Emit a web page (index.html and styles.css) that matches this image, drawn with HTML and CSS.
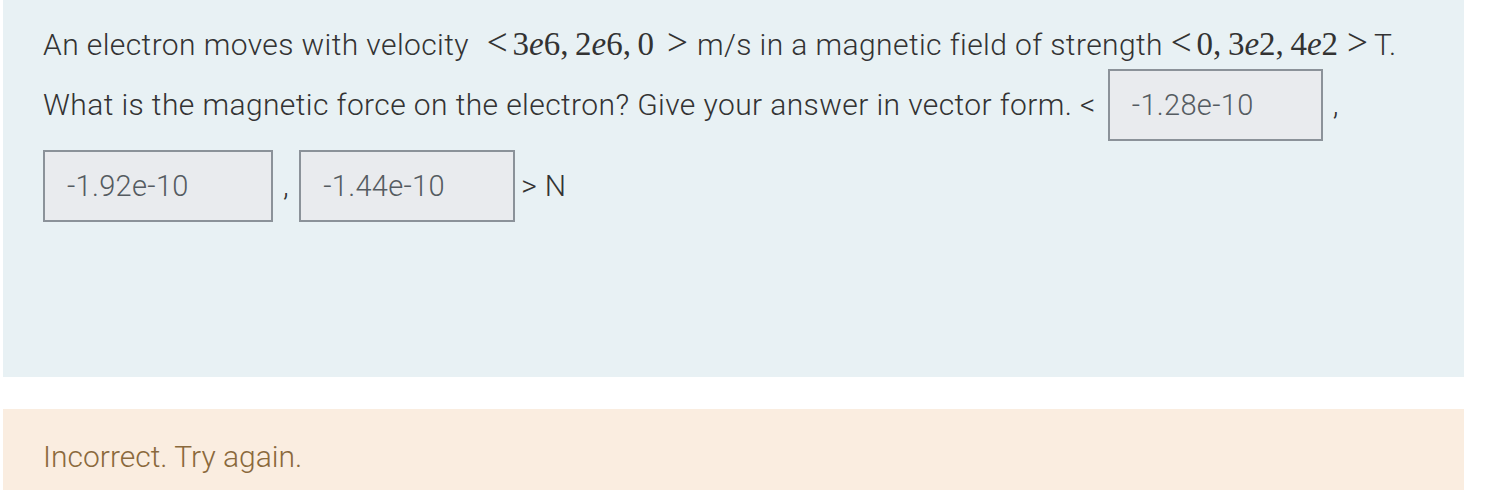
FILE: index.html
```html
<!DOCTYPE html>
<html lang="en">
<head>
  <meta charset="UTF-8" />
  <title>Magnetic force question</title>
  <link rel="stylesheet" href="styles.css">
</head>

<body>
  <div class="question">
    <p class="stem">An electron moves with velocity <span class="math first"><span class="rel open">&lt;</span>3<i>e</i>6,&#8201;2<i>e</i>6,&#8201;0<span class="rel close">&gt;</span></span>m/s in a magnetic field of strength <span class="math"><span class="rel open">&lt;</span>0,&#8201;3<i>e</i>2,&#8201;4<i>e</i>2<span class="rel close">&gt;</span></span>T.</p>
    <p class="prompt">What is the magnetic force on the electron? Give your answer in vector form. &lt;<input class="answer first" type="text" value="-1.28e-10"><span class="sep">,</span><input class="answer wide" type="text" value="-1.92e-10"><span class="sep">,</span><input class="answer" type="text" value="-1.44e-10"><span class="unit">&gt; N</span></p>
  </div>

  <div class="feedback">
    <p>Incorrect. Try again.</p>
  </div>
</body>
</html>
```

FILE: styles.css
```css
html, body {
  margin: 0;
  padding: 0;
  background: #fff;
  font-family: Roboto, "Liberation Sans", sans-serif;
  font-weight: 300;
  color: #333;
  overflow: hidden;
}

.question {
  margin-left: 3px;
  width: 1461px;
  height: 377px;
  box-sizing: border-box;
  padding: 26px 40px 0 40px;
  background-color: #e8f1f4;
  font-size: 30px;
  letter-spacing: 0.4px;
}

.question p {
  margin: 0;
}

.stem {
  line-height: 36px;
  margin-bottom: 2px !important;
}

.prompt {
  line-height: 40px;
}

.math {
  font-family: "Liberation Serif", "DejaVu Serif", serif;
  font-weight: 400;
  font-size: 33px;
  letter-spacing: 0;
}

.math i {
  font-style: italic;
}

.rel {
  font-size: 37px;
  line-height: 0;
}

.rel.open {
  margin: 0 5px 0 0;
}

.math.first .rel.open {
  margin-left: 10px;
}

.rel.close {
  margin: 0 6px 0 9px;
}

.math.first .rel.close {
  margin: 0 9px 0 13px;
}

.answer {
  width: 216px;
  height: 72px;
  box-sizing: border-box;
  margin: 4px 0 5px 0;
  padding: 0 0 0 22px;
  border: 2px solid #8b9299;
  border-radius: 0;
  background-color: #e9ebee;
  font-family: inherit;
  font-weight: 300;
  font-size: 29px;
  letter-spacing: 0.3px;
  color: #555b61;
  vertical-align: baseline;
  outline: none;
}

.answer.first {
  width: 215px;
  margin-left: 12px;
}

.answer.wide {
  width: 230px;
}

.sep {
  padding: 0 10px;
}

.unit {
  margin-left: 6px;
}

.feedback {
  margin-top: 32px;
  margin-left: 3px;
  width: 1461px;
  height: 81px;
  box-sizing: border-box;
  padding: 30px 40px 0 40px;
  background-color: #faede0;
}

.feedback p {
  margin: 0;
  font-size: 30px;
  color: #8a693c;
}
```
